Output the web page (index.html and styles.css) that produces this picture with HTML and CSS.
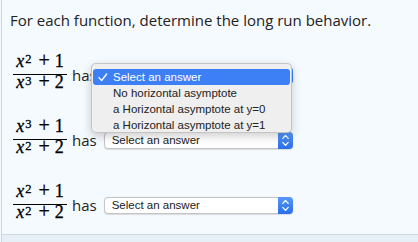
FILE: index.html
```html
<!DOCTYPE html>
<html>
<head>
<meta charset="utf-8">
<link rel="stylesheet" href="styles.css">
</head>
<body>
<div class="page">
  <div class="panel">
    <p class="title">For each function, determine the long run behavior.</p>
    <div class="rows">
      <div class="row">
        <span class="frac">
          <span class="num"><i>x</i><sup>2</sup><span class="op">+</span>1</span>
          <span class="bar"></span>
          <span class="den"><i>x</i><sup>3</sup><span class="op">+</span>2</span>
        </span>
        <span class="has">has</span>
        <span class="select"><span class="sel-text">Select an answer</span><span class="arrow"><svg width="15" height="17" viewBox="0 0 15 17"><path d="M4.8 6.4 L7.5 3.4 L10.2 6.4 M4.8 10.4 L7.5 13.4 L10.2 10.4" fill="none" stroke="#fff" stroke-width="1.3" stroke-linecap="round" stroke-linejoin="round"/></svg></span></span>
      </div>
      <div class="row">
        <span class="frac">
          <span class="num"><i>x</i><sup>3</sup><span class="op">+</span>1</span>
          <span class="bar"></span>
          <span class="den"><i>x</i><sup>2</sup><span class="op">+</span>2</span>
        </span>
        <span class="has">has</span>
        <span class="select"><span class="sel-text">Select an answer</span><span class="arrow"><svg width="15" height="17" viewBox="0 0 15 17"><path d="M4.8 6.4 L7.5 3.4 L10.2 6.4 M4.8 10.4 L7.5 13.4 L10.2 10.4" fill="none" stroke="#fff" stroke-width="1.3" stroke-linecap="round" stroke-linejoin="round"/></svg></span></span>
      </div>
      <div class="row">
        <span class="frac">
          <span class="num"><i>x</i><sup>2</sup><span class="op">+</span>1</span>
          <span class="bar"></span>
          <span class="den"><i>x</i><sup>2</sup><span class="op">+</span>2</span>
        </span>
        <span class="has">has</span>
        <span class="select"><span class="sel-text">Select an answer</span><span class="arrow"><svg width="15" height="17" viewBox="0 0 15 17"><path d="M4.8 6.4 L7.5 3.4 L10.2 6.4 M4.8 10.4 L7.5 13.4 L10.2 10.4" fill="none" stroke="#fff" stroke-width="1.3" stroke-linecap="round" stroke-linejoin="round"/></svg></span></span>
      </div>
    </div>
  </div>
  <div class="menu">
    <div class="item selected"><svg class="check" width="10" height="9" viewBox="0 0 10 9"><path d="M1 4.6 L3.6 7.6 L8.6 1" fill="none" stroke="#fff" stroke-width="1.4" stroke-linecap="round" stroke-linejoin="round"/></svg>Select an answer</div>
    <div class="item">No horizontal asymptote</div>
    <div class="item">a Horizontal asymptote at y=0</div>
    <div class="item">a Horizontal asymptote at y=1</div>
  </div>
</div>
</body>
</html>
```
FILE: styles.css
```css
* { box-sizing: border-box; }
html, body { margin: 0; padding: 0; }
body {
  width: 418px;
  height: 242px;
  overflow: hidden;
  background: #f5faff;
}
.page {
  position: relative;
  height: 242px;
  margin-left: 1px;
  border-left: 1px solid #cbd6e1;
  background: #e6eef6;
}
.panel {
  height: 235px;
  background: #f5faff;
  border-bottom: 1px solid #cdd8e3;
  padding: 10px 0 0 8px;
}
.title {
  margin: 0;
  font-family: "Open Sans", sans-serif;
  font-size: 15px;
  line-height: 20px;
  color: #222;
}
.rows {
  margin: 23px 0 0 3px;
  display: flex;
  flex-direction: column;
  gap: 21px;
}
.row {
  display: flex;
  align-items: center;
}
.frac {
  display: flex;
  flex-direction: column;
  align-items: center;
  width: 54px;
  height: 44px;
  padding-bottom: 7px;
  font-family: "Liberation Serif", serif;
  font-size: 18px;
  color: #000;
  -webkit-text-stroke: 0.3px #000;
}
.num, .den {
  display: block;
  line-height: 16px;
  height: 16px;
  white-space: nowrap;
  flex: none;
}
.num { margin-bottom: 5px; }
.den { margin-top: -1px; }
.frac i { font-style: italic; }
.frac sup {
  font-size: 12.5px;
  line-height: 0;
  vertical-align: 0;
  position: relative;
  top: -4.5px;
  margin-left: 1px;
}
.den sup { top: -3.5px; }
.op {
  font-size: 20px;
  line-height: 0;
  margin: 0 5px 0 7px;
}
.bar {
  display: block;
  flex: none;
  width: 54px;
  height: 1px;
  background: #000;
}
.has {
  margin-left: 5px;
  font-family: "Open Sans", sans-serif;
  font-size: 15px;
  line-height: 20px;
  color: #222;
}
.select {
  display: flex;
  width: 189px;
  height: 17px;
  margin-left: 7px;
  margin-top: 1.7px;
  background: #fff;
  border: 1px solid #c4c4c4;
  border-radius: 4px;
  box-shadow: 0 0.5px 1px rgba(0,0,0,0.12);
}
.sel-text {
  flex: 1;
  padding-left: 7px;
  font-family: "Liberation Sans", Arial, sans-serif;
  font-size: 11.5px;
  line-height: 15px;
  color: #222;
}
.arrow {
  display: flex;
  align-items: center;
  justify-content: center;
  width: 15px;
  margin: -1px -1px -1px 0;
  border-radius: 0 4px 4px 0;
  background: linear-gradient(#5597f9, #2a6fe9);
}
.menu {
  position: absolute;
  left: 89px;
  top: 63px;
  width: 201px;
  height: 70px;
  padding-top: 5px;
  background: #efefef;
  border: 0.5px solid rgba(0,0,0,0.18);
  border-radius: 5px;
  box-shadow: 0 3px 10px rgba(0,0,0,0.2);
  z-index: 10;
}
.item {
  position: relative;
  height: 16px;
  margin: 0 1px;
  padding-left: 20px;
  font-family: "Liberation Sans", Arial, sans-serif;
  font-size: 11.5px;
  line-height: 16px;
  color: #222;
  white-space: nowrap;
  border-radius: 3px;
}
.item.selected {
  background: #3d80f6;
  color: #fff;
}
.check {
  position: absolute;
  left: 5px;
  top: 4px;
}
```
